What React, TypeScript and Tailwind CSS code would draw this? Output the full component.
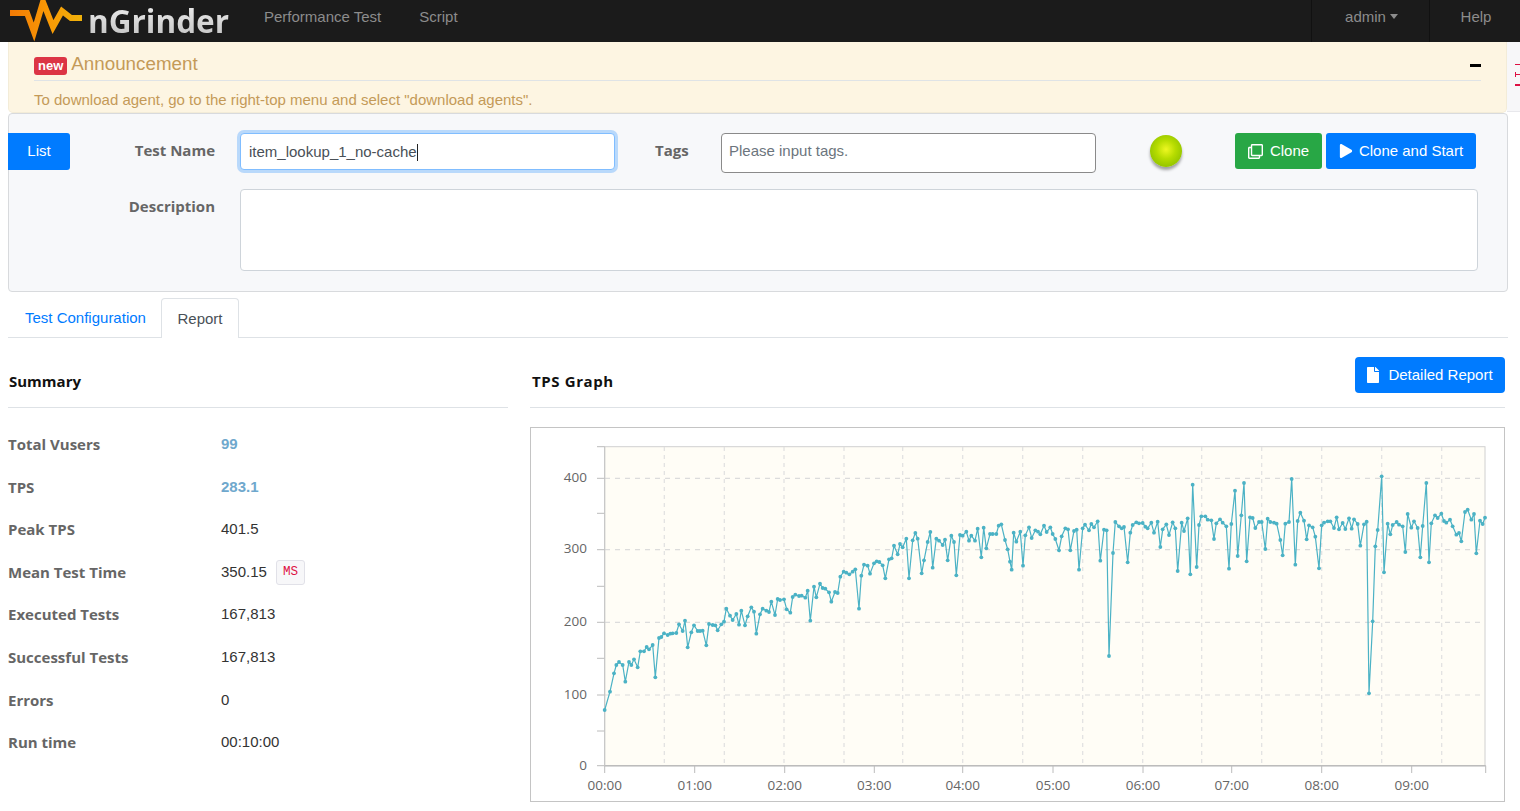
import { FaFile, FaPlay, FaRegClone } from "react-icons/fa";

// readings of the tps series, in px of the chart area
const seriesLeft: number[][] = [
  [224,855],[240,800],[252,745],[259,720],[267,711],[278,720],[286,770],[297,711],[304,720],[312,703],[323,727],[331,679],[342,679],[350,666],[357,673],[368,660],[376,757],[387,639],[394,636],[402,625],[413,630],[421,626],[428,625],[439,624],[447,598],[458,618],[465,587],[473,667],[484,622],[492,601],[503,618],[510,618],[518,617],[529,661],[537,597],[548,600],[556,601],[563,616],[574,598],[582,590],[589,551],[600,572],[608,585],[619,567],[627,599],[634,557],[645,601],[653,574],[664,547],[672,560],[679,626],[690,568],[698,551],[709,557],[717,561],[724,530],[735,570],[743,522],[750,525],[762,523],[770,553],[781,563],[788,516],[796,509],[807,513],[815,512],[826,518],[833,497],[841,587],[852,485],[859,517],[870,476],[878,489],[886,491],[897,502],[904,530],[915,501],[923,504],[931,455],[941,440],[949,443],[958,448],[968,440],[976,433],[987,551],[994,452],[1002,419],[1013,422],[1020,446],[1032,415],[1040,409],[1048,411],[1058,421],[1066,460],[1077,403],[1085,400],[1092,362],[1103,388],[1110,357],[1118,367],[1129,341],[1137,460],[1148,346],[1156,324],[1163,341],[1175,445],[1182,406],[1193,351],[1201,321],[1208,428],[1219,341],[1227,347],[1238,360],[1245,344],[1253,406],[1264,332],[1272,351],[1279,451],[1290,330],[1298,332],[1309,320],[1317,347],[1324,332],[1335,347],[1343,311],[1354,397],[1361,308],[1369,370],[1380,327],[1388,327],[1399,327],[1406,302],[1414,298],[1425,345],[1433,373],
];
const seriesRight: number[][] = [
  [0,410],[5,434],[11,323],[19,350],[31,320],[39,422],[46,331],[57,307],[65,339],[76,316],[84,320],[91,328],[102,302],[110,321],[121,307],[128,327],[136,342],[147,376],[155,334],[166,310],[174,313],[181,376],[192,318],[200,314],[207,434],[218,310],[225,299],[237,316],[244,297],[252,307],[263,289],[271,407],[282,314],[290,316],[297,693],[309,384],[316,291],[327,304],[335,310],[342,306],[353,412],[361,323],[368,300],[379,292],[387,295],[398,294],[406,305],[413,310],[424,293],[432,323],[443,290],[451,366],[458,313],[469,298],[477,330],[488,292],[496,310],[503,438],[515,293],[522,318],[533,280],[541,448],[548,179],[560,426],[567,300],[574,274],[586,274],[593,284],[604,286],[612,342],[619,295],[630,283],[638,293],[649,304],[657,431],[664,297],[675,197],[683,393],[694,271],[702,174],[710,409],[720,277],[728,279],[736,309],[747,291],[755,291],[766,372],[773,281],[781,291],[792,293],[800,296],[811,345],[818,391],[826,296],[837,291],[845,162],[856,419],[863,288],[871,263],[882,287],[890,343],[897,301],[908,307],[916,335],[927,430],[935,301],[942,293],[953,289],[961,289],[972,309],[980,277],[987,313],[998,294],[1006,312],[1017,280],[1025,311],[1032,283],[1043,297],[1051,362],[1062,298],[1070,290],[1077,805],[1088,589],[1096,364],[1103,315],[1115,154],[1122,442],[1133,296],[1141,328],[1148,300],[1160,291],[1167,299],[1178,304],[1186,381],[1193,267],[1204,308],[1212,289],[1223,309],[1231,397],[1238,303],[1249,174],[1257,412],[1264,295],[1275,271],[1283,279],[1294,266],[1302,288],[1309,293],[1320,284],[1328,304],[1339,329],[1347,324],[1354,349],[1365,261],[1373,254],[1384,284],[1392,267],[1399,385],[1410,287],[1418,297],[1425,278],
];

const tpsPoints = [
  ...seriesLeft.map(([x, y]) => [530 + x / 3, 425 + y / 3]),
  ...seriesRight.map(([x, y]) => [1010 + x / 3, 425 + y / 3]),
];

const yMajor = [
  { y: 478.3, label: "400" },
  { y: 549.7, label: "300" },
  { y: 622.3, label: "200" },
  { y: 695, label: "100" },
];
const yMinor = [446.7, 513.3, 586.3, 658.3, 731];
const xGrid = [664.3, 724.3, 784, 844, 902.7, 962.7, 1022.7, 1082.7, 1142.7, 1201.7, 1261.7, 1321.7, 1381.7, 1441.7];
const xTicks = [
  { x: 604.7, label: "00:00" },
  { x: 694.7, label: "01:00" },
  { x: 784.7, label: "02:00" },
  { x: 874.3, label: "03:00" },
  { x: 962.7, label: "04:00" },
  { x: 1053, label: "05:00" },
  { x: 1143, label: "06:00" },
  { x: 1231.7, label: "07:00" },
  { x: 1321.7, label: "08:00" },
  { x: 1411.7, label: "09:00" },
];

const summary = [
  { label: "Total Vusers", value: "99", accent: true },
  { label: "TPS", value: "283.1", accent: true },
  { label: "Peak TPS", value: "401.5" },
  { label: "Mean Test Time", value: "350.15", unit: "MS" },
  { label: "Executed Tests", value: "167,813" },
  { label: "Successful Tests", value: "167,813" },
  { label: "Errors", value: "0" },
  { label: "Run time", value: "00:10:00" },
];

function Logo() {
  return (
    <div className="flex h-[42px] w-[264px] shrink-0 items-center overflow-hidden">
      <svg width="80" height="42" viewBox="0 0 80 42" className="ml-[8px] shrink-0" aria-hidden>
        <defs>
          <linearGradient id="wave" x1="0" y1="0" x2="1" y2="0">
            <stop offset="0" stopColor="#f27a05" />
            <stop offset="0.55" stopColor="#f99a05" />
            <stop offset="1" stopColor="#efb20b" />
          </linearGradient>
        </defs>
        <polyline
          points="2,13 19,13 26,32 35,2 45,27 54,11 63,18 74,18"
          fill="none"
          stroke="url(#wave)"
          strokeWidth="6"
          strokeLinejoin="miter"
        />
      </svg>
      <span className="font-['Open_Sans',sans-serif] text-[31.5px] leading-none font-bold text-transparent bg-[linear-gradient(#ececec,#c4c4c4)] bg-clip-text">
        nGrinder
      </span>
    </div>
  );
}

function Navbar() {
  return (
    <nav className="flex h-[42px] bg-[#1b1b1b] text-[15px] text-[#8c8c8c]">
      <Logo />
      <div className="flex flex-1 gap-[38px] pt-[6px]">
        <span>Performance Test</span>
        <span>Script</span>
      </div>
      <div className="flex w-[118px] justify-center border-l border-[#111111] pt-[6px] pl-[2px]">
        <span>admin</span>
        <span className="mt-[8px] ml-[4px] h-0 w-0 border-x-[4.5px] border-t-[5px] border-x-transparent border-t-[#8c8c8c]" />
      </div>
      <div className="flex w-[91px] justify-center border-l border-[#111111] pt-[6px] pl-[2px]">
        <span>Help</span>
      </div>
    </nav>
  );
}

function Announcement() {
  return (
    <div className="flex">
      <div className="ml-[8px] h-[71px] w-[1499px] rounded-b-[5px] border-x border-b border-[#f3ecd8] bg-[#fdf5e2] px-[25px] text-[#c49a58]">
        <div className="flex h-[39px] items-center border-b border-[#dfe3e6] pt-[7px]">
          <span className="mt-[2px] rounded-[3px] bg-[#dc3545] px-[4px] text-[13px] leading-[18px] font-bold text-white">
            new
          </span>
          <span className="ml-[4px] text-[18.8px] leading-none">Announcement</span>
          <span className="ml-auto mt-[1px] h-[3px] w-[11px] bg-black" />
        </div>
        <p className="mt-[10px] text-[15px] leading-[18px]">
          To download agent, go to the right-top menu and select "download agents".
        </p>
      </div>
      <div className="flex h-[70px] flex-1 flex-col gap-[7px] border-b border-[#e8e8ec] bg-[#f7f7f9] pt-[22px] pl-[8px]">
        <span className="h-px w-[5px] bg-[#dd1144]" />
        <span className="h-[5px] w-[5px] border-l border-[#dd1144] pt-[2px]">
          <span className="block h-px w-full bg-[#dd1144]" />
        </span>
        <span className="h-[2px] w-[5px] bg-[#dd1144]" />
      </div>
    </div>
  );
}

function TestForm() {
  return (
    <section className="mx-[8px] mr-[12px] h-[179px] rounded-[4px] border border-[#d8dadd] bg-[#f7f8fa] pt-[19px]">
      <div className="flex items-start">
        <button className="ml-[-1px] h-[37px] w-[62px] rounded-r-[3px] bg-[#007bff] text-[15px] text-white">List</button>
        <label className="w-[145px] pt-[6px] text-right font-['Open_Sans',sans-serif] text-[15px] font-bold text-[#666666]">
          Test Name
        </label>
        <div className="ml-[25px] flex h-[37px] w-[375px] items-center rounded-[4px] border border-[#80bdff] bg-white pt-px pl-[8px] text-[15px] text-[#495057] shadow-[0_0_0_3px_rgba(0,123,255,0.25)]">
          item_lookup_1_no-cache
          <span className="h-[17px] w-px bg-[#222222]" />
        </div>
        <label className="ml-[40px] w-[66px] pt-[6px] font-['Open_Sans',sans-serif] text-[15px] font-bold text-[#666666]">
          Tags
        </label>
        <input
          placeholder="Please input tags."
          className="h-[40px] w-[375px] rounded-[4px] border border-[#8a8a8a] bg-white px-[7px] pb-[5px] text-[15px] outline-none placeholder:text-[#6c757d]"
        />
        <span className="mt-[2px] ml-[54px] h-[32px] w-[32px] rounded-full bg-[radial-gradient(circle_at_50%_45%,#eef722_0%,#b6dc00_40%,#93c400_75%,#6c8c12_100%)] shadow-[0_3px_3px_rgba(0,0,0,0.35)]" />
        <button className="ml-[53px] flex h-[36px] w-[87px] items-center justify-center gap-[7px] rounded-[3px] bg-[#28a745] text-[15px] text-white">
          <FaRegClone size={15} />
          Clone
        </button>
        <button className="ml-[4px] flex h-[36px] w-[150px] items-center justify-center gap-[6px] rounded-[3px] bg-[#007bff] text-[15px] text-white">
          <FaPlay size={14} />
          Clone and Start
        </button>
      </div>
      <div className="mt-[16px] flex items-start">
        <label className="w-[206px] pt-[6px] text-right font-['Open_Sans',sans-serif] text-[15px] font-bold text-[#666666]">
          Description
        </label>
        <textarea className="ml-[25px] h-[82px] w-[1238px] resize-none rounded-[4px] border border-[#ced4da] bg-white outline-none" />
      </div>
    </section>
  );
}

function Tabs() {
  return (
    <div className="mt-[6px] mr-[12px] ml-[8px] flex h-[40px] border-b border-[#dee2e6] text-[15px]">
      <span className="w-[153px] pt-[9px] pl-[17px] text-[#007bff]">Test Configuration</span>
      <span className="h-[40px] w-[78px] rounded-t-[4px] border-x border-t border-[#dee2e6] bg-white pt-[9px] text-center text-[#495057]">
        Report
      </span>
    </div>
  );
}

function Summary() {
  return (
    <div className="w-[500px] shrink-0">
      <h3 className="h-[51px] border-b border-[#dee2e6] pt-[14px] pl-px font-['Open_Sans',sans-serif] text-[15px] leading-[20px] font-bold text-[#111111]">
        Summary
      </h3>
      <dl className="mt-[15px] flex flex-col">
        {summary.map((row) => (
          <div key={row.label} className="flex h-[42.6px] items-center">
            <dt className="w-[213px] font-['Open_Sans',sans-serif] text-[15px] font-bold text-[#666666]">{row.label}</dt>
            <dd className={row.accent ? "text-[15px] font-bold text-[#6fa8cd]" : "text-[15px] text-[#333333]"}>
              {row.value}
            </dd>
            {row.unit && (
              <code className="ml-[9px] rounded-[3px] border border-[#e1e1e8] bg-[#f7f7f9] px-[6px] py-[2px] font-['Liberation_Mono',monospace] text-[12.6px] text-[#dd1144]">
                {row.unit}
              </code>
            )}
          </div>
        ))}
      </dl>
    </div>
  );
}

function TpsChart() {
  const line = tpsPoints.map(([x, y]) => `${x.toFixed(1)},${y.toFixed(1)}`).join(" ");
  return (
    <svg viewBox="531 428 973 373" width="973" height="373" className="block">
      <g>
        <rect x="604.7" y="446.7" width="880.3" height="319" fill="#fffdf6" stroke="#d0d0d0" />
        {yMajor.map((t) => (
          <line key={t.y} x1="605" x2="1485" y1={t.y} y2={t.y} stroke="#dcdcdc" strokeWidth="1.2" strokeDasharray="5 5" />
        ))}
        {xGrid.map((x) => (
          <line key={x} x1={x} x2={x} y1="447" y2="765" stroke="#e0e0e0" strokeWidth="1.2" strokeDasharray="4 4" />
        ))}
        {[...yMajor.map((t) => t.y), ...yMinor, 765.7].map((y) => (
          <line key={y} x1="597" x2="604.7" y1={y} y2={y} stroke="#bcbcbc" />
        ))}
        {[...xTicks.map((t) => t.x), 1485.7].map((x) => (
          <line key={x} x1={x} x2={x} y1="765.7" y2="773" stroke="#bcbcbc" />
        ))}
        <line x1="604.7" x2="1485.7" y1="765.7" y2="765.7" stroke="#bcbcbc" strokeWidth="1.5" />
        <line x1="604.7" x2="604.7" y1="446.7" y2="765.7" stroke="#c4c4c4" />
      </g>
      <polyline points={line} fill="none" stroke="#4bb2c5" strokeWidth="1.2" />
      {tpsPoints.map(([x, y], i) => (
        <circle key={i} cx={x} cy={y} r="1.9" fill="#4bb2c5" />
      ))}
      <g fontFamily="'Open Sans', sans-serif" fontSize="13.5" fill="#666666">
        {yMajor.map((t) => (
          <text key={t.label} x="587" y={t.y + 3.7} textAnchor="end">
            {t.label}
          </text>
        ))}
        <text x="587" y="770" textAnchor="end">
          0
        </text>
        {xTicks.map((t) => (
          <text key={t.label} x={t.x} y="790" textAnchor="middle">
            {t.label}
          </text>
        ))}
      </g>
    </svg>
  );
}

function Graph() {
  return (
    <div className="ml-[22px] w-[975px]">
      <div className="flex h-[51px] items-start border-b border-[#dee2e6]">
        <h3 className="pt-[14px] pl-[2px] font-['Open_Sans',sans-serif] text-[15px] leading-[20px] font-bold tracking-[0.6px] text-[#111111]">
          TPS Graph
        </h3>
        <button className="ml-auto flex h-[36px] w-[150px] items-center justify-center gap-[7px] rounded-[4px] bg-[#007bff] pr-[2px] text-[15px] text-white">
          <FaFile size={16} />
          Detailed Report
        </button>
      </div>
      <div className="mt-[19px] border border-[#c4c4c4]">
        <TpsChart />
      </div>
    </div>
  );
}

export default function App() {
  return (
    <div className="h-[811px] w-[1520px] overflow-hidden bg-white font-['Liberation_Sans',Arial,sans-serif]">
      <Navbar />
      <Announcement />
      <TestForm />
      <Tabs />
      <div className="mt-[19px] ml-[8px] flex">
        <Summary />
        <Graph />
      </div>
    </div>
  );
}
